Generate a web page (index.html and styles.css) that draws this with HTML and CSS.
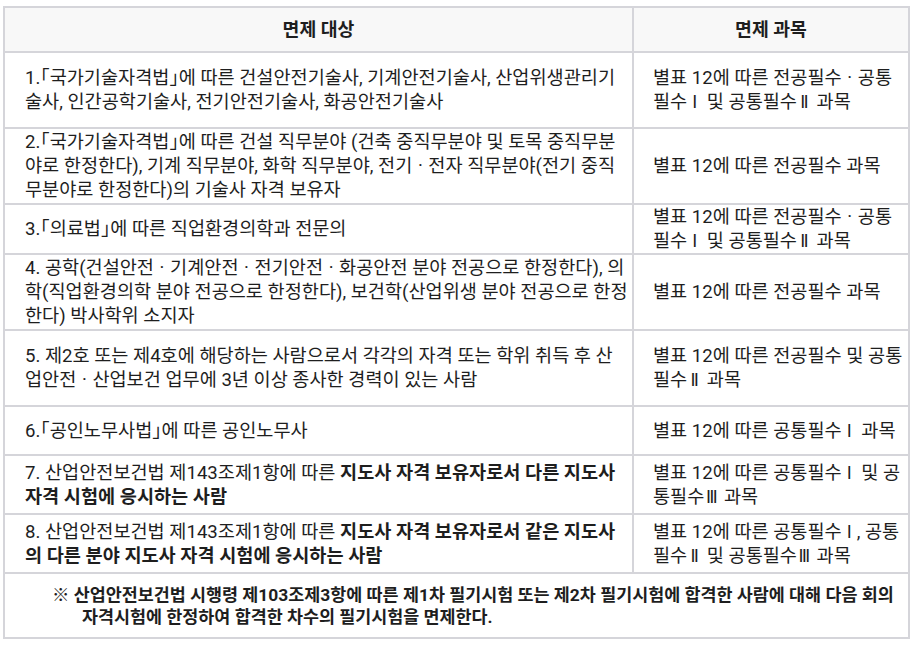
FILE: index.html
```html
<!DOCTYPE html>
<html lang="ko">
<head>
<meta charset="utf-8">
<title>면제 대상 및 면제 과목</title>
<link rel="stylesheet" href="styles.css">
</head>
<body>
<table class="exempt">
  <colgroup>
    <col class="col-target">
    <col class="col-subject">
  </colgroup>
  <thead>
    <tr class="row-head">
      <th>면제 대상</th>
      <th>면제 과목</th>
    </tr>
  </thead>
  <tbody>
    <tr class="row-tall">
      <td class="target">1.「국가기술자격법」에 따른 건설안전기술사, 기계안전기술사, 산업위생관리기술사, 인간공학기술사, 전기안전기술사, 화공안전기술사</td>
      <td class="subject">별표 12에 따른 전공필수 <span class="dot">·</span> 공통필수<span class="num">Ⅰ</span> 및 공통필수<span class="num">Ⅱ</span> 과목</td>
    </tr>
    <tr class="row-tall">
      <td class="target">2.「국가기술자격법」에 따른 건설 직무분야 (건축 중직무분야 및 토목 중직무분야로 한정한다), 기계 직무분야, 화학 직무분야, 전기 <span class="dot">·</span> 전자 직무분야(전기 중직무분야로 한정한다)의 기술사 자격 보유자</td>
      <td class="subject">별표 12에 따른 전공필수 과목</td>
    </tr>
    <tr class="row-short">
      <td class="target">3.「의료법」에 따른 직업환경의학과 전문의</td>
      <td class="subject">별표 12에 따른 전공필수 <span class="dot">·</span> 공통필수<span class="num">Ⅰ</span> 및 공통필수<span class="num">Ⅱ</span> 과목</td>
    </tr>
    <tr class="row-tall">
      <td class="target">4. 공학(건설안전 <span class="dot">·</span> 기계안전 <span class="dot">·</span> 전기안전 <span class="dot">·</span> 화공안전 분야 전공으로 한정한다), 의학(직업환경의학 분야 전공으로 한정한다), 보건학(산업위생 분야 전공으로 한정한다) 박사학위 소지자</td>
      <td class="subject">별표 12에 따른 전공필수 과목</td>
    </tr>
    <tr class="row-tall">
      <td class="target">5. 제2호 또는 제4호에 해당하는 사람으로서 각각의 자격 또는 학위 취득 후 산업안전 <span class="dot">·</span> 산업보건 업무에 3년 이상 종사한 경력이 있는 사람</td>
      <td class="subject">별표 12에 따른 전공필수 및 공통필수<span class="num">Ⅱ</span> 과목</td>
    </tr>
    <tr class="row-short">
      <td class="target">6.「공인노무사법」에 따른 공인노무사</td>
      <td class="subject">별표 12에 따른 공통필수<span class="num">Ⅰ</span> 과목</td>
    </tr>
    <tr class="row-mid">
      <td class="target">7. 산업안전보건법 제143조제1항에 따른 <strong>지도사 자격 보유자로서 다른 지도사 자격 시험에 응시하는 사람</strong></td>
      <td class="subject">별표 12에 따른 공통필수<span class="num">Ⅰ</span> 및 공통필수<span class="num">Ⅲ</span> 과목</td>
    </tr>
    <tr class="row-mid">
      <td class="target">8. 산업안전보건법 제143조제1항에 따른 <strong>지도사 자격 보유자로서 같은 지도사의 다른 분야 지도사 자격 시험에 응시하는 사람</strong></td>
      <td class="subject">별표 12에 따른 공통필수<span class="num">Ⅰ</span>, 공통필수<span class="num">Ⅱ</span> 및 공통필수<span class="num">Ⅲ</span> 과목</td>
    </tr>
    <tr class="row-note">
      <td class="note" colspan="2">※ 산업안전보건법 시행령 제103조제3항에 따른 제1차 필기시험 또는 제2차 필기시험에 합격한 사람에 대해 다음 회의 자격시험에 한정하여 합격한 차수의 필기시험을 면제한다.</td>
    </tr>
  </tbody>
</table>
</body>
</html>
```

FILE: styles.css
```css
html, body {
  margin: 0;
  padding: 0;
  background: #ffffff;
}

body {
  padding: 6px 7px 0 3px;
  font-family: Roboto, "Noto Sans CJK KR", sans-serif;
  font-size: 18.6px;
  line-height: 24px;
  color: #1e1e1e;
  font-feature-settings: "halt";
}

.exempt {
  width: 907px;
  table-layout: fixed;
  border-collapse: separate;
  border-spacing: 0;
  border-top: 2px solid #d5d5da;
  border-left: 2px solid #d5d5da;
}

.col-target {
  width: 629px;
}

.col-subject {
  width: 276px;
}

.exempt th,
.exempt td {
  border-right: 2px solid #d5d5da;
  border-bottom: 2px solid #d5d5da;
  vertical-align: middle;
  padding: 0 4px 0 20px;
  text-align: left;
}

.exempt th {
  background: #f8f8f8;
  font-size: 18.3px;
  font-weight: 700;
  text-align: center;
  padding: 0;
}

.exempt td.subject {
  padding-left: 19px;
  padding-right: 5px;
}

.exempt strong {
  font-weight: 700;
}

.dot {
  padding: 0 1px;
}

.num {
  display: inline-block;
  width: 15px;
  text-align: center;
  font-family: "DejaVu Sans", "Noto Sans CJK KR", sans-serif;
  font-size: 17px;
}

.row-head {
  height: 45px;
}

.row-tall {
  height: 76px;
}

.row-short {
  height: 49px;
}

.row-mid {
  height: 59px;
}

.row-note {
  height: 65px;
}

.exempt td.note {
  font-size: 17.4px;
  font-weight: 700;
  line-height: 22px;
  padding: 0 14px 0 77px;
  text-indent: -30px;
}
```
